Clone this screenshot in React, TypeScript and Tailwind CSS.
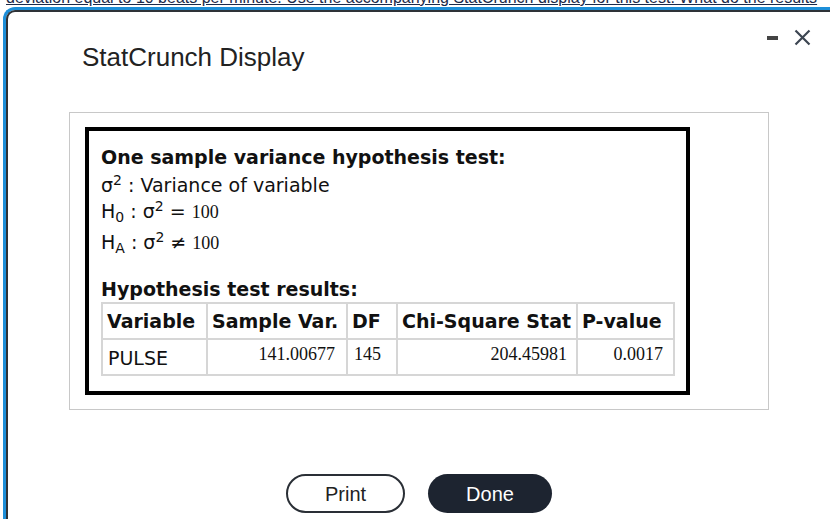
export default function App() {
  return (
    <div className="relative h-[519px] w-[830px] overflow-hidden bg-white" style={{ fontFamily: "Arial, 'Liberation Sans', sans-serif" }}>
      <div className="h-[7px] overflow-hidden">
        <p className="-mt-[11px] whitespace-nowrap pl-[6px] text-[16px] leading-[18px] text-[#1c2a4a] underline">
          deviation equal to 10 beats per minute. Use the accompanying StatCrunch display for this test. What do the results
        </p>
      </div>
      <div className="ml-[3px] h-[520px] w-[840px] rounded-tl-[12px] border-l-[3px] border-t-[3px] border-[#1d8fd9]">
        <div className="h-full w-full rounded-tl-[9px] border-l-2 border-t-2 border-[#2e3338] bg-white">
          <div className="flex items-start justify-between pr-[32px]">
            <h1 className="ml-[74px] mt-[30px] text-[26px] leading-[30px] text-[#222]">StatCrunch Display</h1>
            <div className="mt-[17px] flex items-center gap-[16px]">
              <span className="mt-[1px] block h-[4px] w-[11px] bg-[#444]" />
              <svg width="17" height="17" viewBox="0 0 17 17" className="text-[#3d4652]">
                <path d="M1.5 1.5 L15.5 15.5 M15.5 1.5 L1.5 15.5" stroke="currentColor" strokeWidth="2.2" />
              </svg>
            </div>
          </div>
          <div className="ml-[61px] mt-[40px] h-[298px] w-[700px] border border-[#c8c8c8] pl-[15px] pt-[14px]">
            <StatOutput />
          </div>
          <div className="ml-[278px] mt-[64px] flex gap-[23px]">
            <button className="h-[39px] w-[119px] rounded-full border-2 border-[#2a2f36] bg-white text-[20px] text-[#222]">Print</button>
            <button className="h-[39px] w-[124px] rounded-full bg-[#1d2430] text-[20px] text-white">Done</button>
          </div>
        </div>
      </div>
    </div>
  );
}

function StatOutput() {
  const serif = { fontFamily: "'Liberation Serif', 'Times New Roman', serif" };
  const cell = "border-2 border-[#d6d6d6]";
  return (
    <div
      className="h-[268px] w-[605px] border-[4px] border-black pl-[12px] pt-[12px] text-[19px] text-[#111]"
      style={{ fontFamily: "'DejaVu Sans', Verdana, sans-serif" }}
    >
      <p className="font-bold leading-[28px]">One sample variance hypothesis test:</p>
      <p className="leading-[28px]">
        σ<sup className="text-[14px]">2</sup> : Variance of variable
      </p>
      <p className="leading-[24px]">
        H<sub className="text-[14px]">0</sub> : σ<sup className="text-[14px]">2</sup> ={" "}
        <span className="text-[18px]" style={serif}>100</span>
      </p>
      <p className="mt-[4px] leading-[28px]">
        H<sub className="text-[14px]">A</sub> : σ<sup className="text-[14px]">2</sup> ≠{" "}
        <span className="text-[18px]" style={serif}>100</span>
      </p>
      <p className="mt-[19px] font-bold leading-[26px]">Hypothesis test results:</p>
      <table className="border-collapse border-2 border-[#d6d6d6]">
        <thead>
          <tr className="h-[36px]">
            <th className={`${cell} w-[105px] px-[4px] text-left font-bold`}>Variable</th>
            <th className={`${cell} w-[140px] px-[4px] text-left font-bold`}>Sample Var.</th>
            <th className={`${cell} w-[50px] px-[4px] text-left font-bold`}>DF</th>
            <th className={`${cell} w-[180px] px-[4px] text-left font-bold`}>Chi-Square Stat</th>
            <th className={`${cell} w-[97px] px-[4px] text-left font-bold`}>P-value</th>
          </tr>
        </thead>
        <tbody>
          <tr className="h-[36px]">
            <td className={`${cell} px-[5px] pt-[2px]`}>PULSE</td>
            <td className={`${cell} px-[11px] pb-[6px] text-right text-[18px]`} style={serif}>141.00677</td>
            <td className={`${cell} px-[6px] pb-[6px] text-left text-[18px]`} style={serif}>145</td>
            <td className={`${cell} px-[9px] pb-[6px] text-right text-[18px]`} style={serif}>204.45981</td>
            <td className={`${cell} px-[10px] pb-[6px] text-right text-[18px]`} style={serif}>0.0017</td>
          </tr>
        </tbody>
      </table>
    </div>
  );
}
